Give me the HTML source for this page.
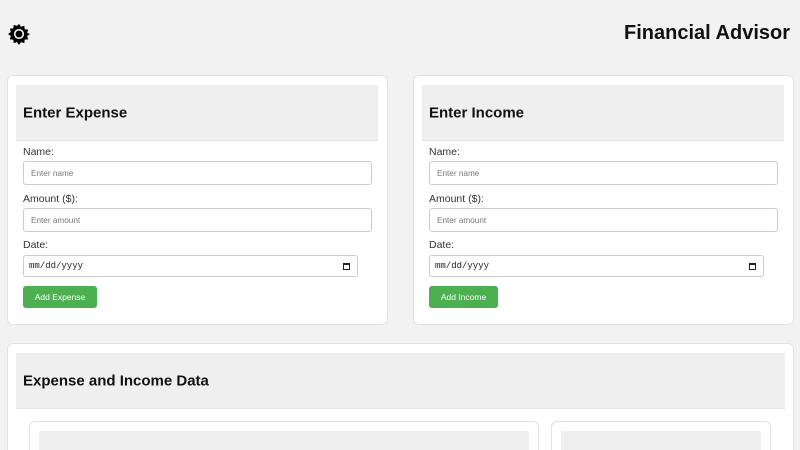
<!DOCTYPE html>
<html style="width:800px;height:450px;overflow:hidden"><head><meta charset="utf-8">
<style>
*{box-sizing:border-box;margin:0;padding:0}
body{width:800px;height:450px;overflow:hidden;background:#f2f2f2;font-family:"Liberation Sans",Arial,sans-serif;color:#111;position:relative}
.abs{position:absolute}
.card{position:absolute;background:#fff;border:1px solid #e2e2e2;border-radius:6px}
.hd{position:absolute;background:#efefef;border-bottom:1px solid #e4e4e4}
.hd h2{position:absolute;left:7px;top:50%;transform:translateY(-50%);font-size:15px;font-weight:bold;white-space:nowrap}
.lbl{position:absolute;font-size:10.5px;color:#333}
.inp{position:absolute;border:1px solid #ccc;border-radius:3px;background:#fff;font-size:8.2px;color:#777;padding-left:7px;display:flex;align-items:center}
.date{font-family:"Liberation Mono",monospace;font-size:9px;color:#222;padding-left:5px}
.cal{position:absolute;right:7px;top:7px;width:7px;height:7px;border:1.2px solid #222;border-top-width:2.2px}
.btn{position:absolute;background:#4caf50;color:#fff;border-radius:3px;font-size:8.5px;display:flex;align-items:center;justify-content:center}
</style></head><body>
<svg class="abs" style="left:8px;top:23px" width="22" height="22" viewBox="0 0 24 24">
<path fill="#000" d="M12 1l2.2 3.1 3.6-1.1.4 3.8 3.8.4-1.1 3.6L24 12l-3.1 2.2 1.1 3.6-3.8.4-.4 3.8-3.6-1.1L12 24l-2.2-3.1-3.6 1.1-.4-3.8-3.8-.4 1.1-3.6L0 12l3.1-2.2-1.1-3.6 3.8-.4.4-3.8 3.6 1.1z"/>
<circle cx="12" cy="12" r="5.5" fill="#fff"/><circle cx="12" cy="12" r="3.8" fill="#000"/>
</svg>
<div class="abs" style="right:10px;top:22px;font-size:20px;font-weight:bold">Financial Advisor</div>

<div class="card" style="left:7px;top:75px;width:381px;height:250px"></div>
<div class="hd" style="left:16px;top:85px;width:362px;height:56px"><h2>Enter Expense</h2></div>
<div class="lbl" style="left:23px;top:146px">Name:</div>
<div class="inp" style="left:23px;top:161px;width:349px;height:24px">Enter name</div>
<div class="lbl" style="left:23px;top:193px">Amount ($):</div>
<div class="inp" style="left:23px;top:208px;width:349px;height:24px">Enter amount</div>
<div class="lbl" style="left:23px;top:239px">Date:</div>
<div class="inp date" style="left:23px;top:255px;width:335px;height:22px">mm/dd/yyyy<span class="cal"></span></div>
<div class="btn" style="left:23px;top:286px;width:74px;height:22px">Add Expense</div>

<div class="card" style="left:413px;top:75px;width:381px;height:250px"></div>
<div class="hd" style="left:422px;top:85px;width:362px;height:56px"><h2>Enter Income</h2></div>
<div class="lbl" style="left:429px;top:146px">Name:</div>
<div class="inp" style="left:429px;top:161px;width:349px;height:24px">Enter name</div>
<div class="lbl" style="left:429px;top:193px">Amount ($):</div>
<div class="inp" style="left:429px;top:208px;width:349px;height:24px">Enter amount</div>
<div class="lbl" style="left:429px;top:239px">Date:</div>
<div class="inp date" style="left:429px;top:255px;width:335px;height:22px">mm/dd/yyyy<span class="cal"></span></div>
<div class="btn" style="left:429px;top:286px;width:69px;height:22px">Add Income</div>

<div class="card" style="left:7px;top:343px;width:787px;height:112px;border-bottom:none"></div>
<div class="hd" style="left:16px;top:353px;width:769px;height:56px"><h2>Expense and Income Data</h2></div>
<div class="card" style="left:29px;top:421px;width:510px;height:34px;border-bottom:none"></div>
<div class="abs" style="left:39px;top:431px;width:490px;height:19px;background:#efefef"></div>
<div class="card" style="left:551px;top:421px;width:220px;height:34px;border-bottom:none"></div>
<div class="abs" style="left:561px;top:431px;width:200px;height:19px;background:#efefef"></div>
</body></html>
